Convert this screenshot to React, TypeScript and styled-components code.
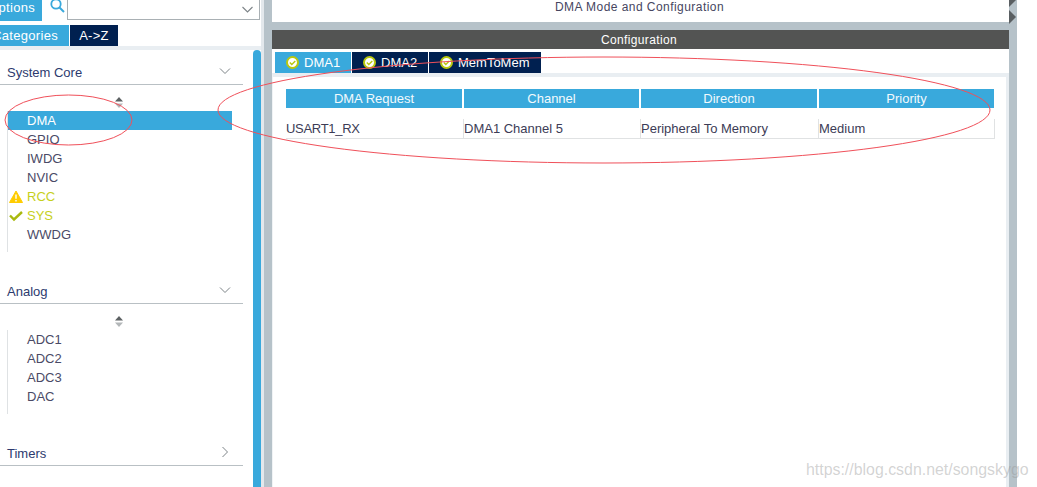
import React from "react";
import styled, { createGlobalStyle } from "styled-components";

const GlobalStyle = createGlobalStyle`
  html, body {
    margin: 0;
    padding: 0;
    background: #fff;
  }
  body {
    font-family: "Liberation Sans", Arial, sans-serif;
    font-size: 13px;
    color: #3b3b5c;
  }
`;

const Page = styled.div`
  position: relative;
  display: flex;
  width: 1037px;
  height: 487px;
  overflow: hidden;
  background: #fff;
`;

const Sidebar = styled.aside`
  width: 261px;
  height: 487px;
  flex: none;
  display: flex;
  flex-direction: column;
`;

const SearchRow = styled.div`
  display: flex;
  height: 25px;
  flex: none;
`;

const OptionsButton = styled.div`
  width: 42px;
  height: 21px;
  background: #39a9dc;
  color: #fff;
  display: flex;
  justify-content: flex-end;
  align-items: center;
  overflow: hidden;
  white-space: nowrap;
  padding: 0 7px 6px 0;
  box-sizing: border-box;
  letter-spacing: 0.3px;
`;

const SearchIcon = styled.svg`
  width: 15px;
  height: 15px;
  margin: -2px 2px 0 8px;
  flex: none;
`;

const SearchBox = styled.div`
  width: 193px;
  height: 20px;
  box-sizing: border-box;
  border: 1px solid #a9b0b4;
  border-top: 0;
  display: flex;
  justify-content: flex-end;
  align-items: center;
  padding-right: 6px;
`;

const SortTabs = styled.div`
  display: flex;
  gap: 1px;
  height: 21px;
  flex: none;
`;

const SortTab = styled.div<{ $active?: boolean; $width: number }>`
  width: ${(p) => p.$width}px;
  background: ${(p) => (p.$active ? "#39a9dc" : "#002050")};
  color: #fff;
  display: flex;
  justify-content: ${(p) => (p.$active ? "flex-end" : "center")};
  align-items: center;
  overflow: hidden;
  white-space: nowrap;
  box-sizing: border-box;
  padding-right: ${(p) => (p.$active ? 11 : 0)}px;
  letter-spacing: 0.3px;
`;

const SidebarBody = styled.div`
  flex: 1;
  display: flex;
  border-top: 4px solid #e9eef2;
  min-height: 0;
`;

const CategoryList = styled.div`
  width: 253px;
  flex: none;
  box-sizing: border-box;
  padding-right: 10px;
`;

const Scrollbar = styled.div`
  width: 8px;
  flex: none;
  background: #39a9dc;
  border-radius: 4px 4px 0 0;
`;

const SectionHeader = styled.div<{ $top: number }>`
  height: 20px;
  margin-top: ${(p) => p.$top}px;
  border-bottom: 1px solid #b9c0c4;
  display: flex;
  justify-content: space-between;
  align-items: center;
  padding: 0 12px 1px 7px;
  color: #2c3a6e;
  font-size: 13px;
  line-height: 20px;
`;

const Chevron = styled.svg`
  width: 12px;
  height: 12px;
  flex: none;
  margin-top: -4px;
`;

const ScrollArrows = styled.svg`
  display: block;
  width: 8px;
  height: 12px;
  margin: 12px 0 0 115px;
`;

const PeripheralList = styled.ul`
  list-style: none;
  margin: 2px 11px 0 7px;
  padding: 0 0 8px;
  border-left: 1px solid #dfe2e4;
`;

const Peripheral = styled.li<{ $state?: "selected" | "warn" | "ok" }>`
  position: relative;
  height: 19px;
  line-height: 19px;
  padding-left: 19px;
  font-size: 13px;
  background: ${(p) => (p.$state === "selected" ? "#39a9dc" : "transparent")};
  color: ${(p) =>
    p.$state === "selected"
      ? "#fff"
      : p.$state
        ? "#c6d01c"
        : "#4a4a66"};
`;

const StatusIcon = styled.svg`
  position: absolute;
  left: 1px;
  top: 3px;
  width: 14px;
  height: 14px;
`;

const Divider = styled.div`
  width: 3px;
  flex: none;
  background: #e3e8ec;
`;

const Splitter = styled.div`
  width: 8px;
  flex: none;
  background: #b6c2c9;
`;

const Main = styled.main`
  width: 737px;
  flex: none;
  display: flex;
  flex-direction: column;
`;

const TopPanel = styled.div`
  height: 22px;
  flex: none;
  text-align: center;
  line-height: 15px;
  font-size: 12px;
  letter-spacing: 0.45px;
  color: #46465f;
  padding-right: 2px;
  box-sizing: border-box;
`;

const Gap = styled.div`
  height: 8px;
  flex: none;
  background: #b6c2c9;
`;

const ConfigTitle = styled.div`
  height: 19px;
  flex: none;
  background: #535453;
  color: #fff;
  text-align: center;
  line-height: 20px;
  font-size: 12px;
  letter-spacing: 0.35px;
  padding-right: 3px;
  box-sizing: border-box;
`;

const TabBar = styled.div`
  display: flex;
  gap: 1px;
  height: 21px;
  margin-top: 3px;
  padding-left: 3px;
  flex: none;
`;

const Tab = styled.div<{ $active?: boolean; $width: number }>`
  width: ${(p) => p.$width}px;
  background: ${(p) => (p.$active ? "#39a9dc" : "#002050")};
  color: #fff;
  display: flex;
  align-items: center;
  gap: 5px;
  padding-left: 11px;
  box-sizing: border-box;
  font-size: 13px;
`;

const TabIcon = styled.svg`
  width: 13px;
  height: 13px;
  flex: none;
`;

const ConfigBody = styled.div`
  flex: 1;
  background: #fff;
  border-top: 4px solid #e9eef2;
  border-right: 3px solid #e9eef2;
  border-left: 1px solid #f0f3f5;
  padding: 12px 12px 0 13px;
`;

const GridRow = styled.div`
  display: grid;
  grid-template-columns: 176px 175px 176px 175px;
  column-gap: 2px;
  width: 708px;
`;

const HeadCell = styled.div`
  height: 19px;
  line-height: 19px;
  background: #39a9dc;
  color: #f2fafd;
  text-align: center;
  font-size: 13px;
`;

const DataRow = styled.div`
  display: grid;
  grid-template-columns: 177px 177px 178px 177px;
  width: 709px;
  height: 20px;
  margin-top: 11px;
  box-sizing: border-box;
  border-bottom: 1px solid #e0e2e3;
  border-right: 1px solid #e0e2e3;
`;

const DataCell = styled.div`
  line-height: 19px;
  font-size: 13px;
  color: #3c3c56;
  border-left: 1px solid #e0e2e3;
  &:first-child {
    border-left: 0;
    letter-spacing: -0.3px;
  }
`;

const RightRail = styled.div`
  position: relative;
  width: 8px;
  flex: none;
  background: #b6c2c9;
`;

const RailArrow = styled.svg<{ $top: number }>`
  position: absolute;
  left: 0;
  top: ${(p) => p.$top}px;
  width: 8px;
  height: 14px;
`;

const Markup = styled.svg`
  position: absolute;
  left: 0;
  top: 0;
  width: 1037px;
  height: 487px;
  pointer-events: none;
`;

const Watermark = styled.div`
  position: absolute;
  left: 806px;
  top: 461px;
  font-size: 15.9px;
  line-height: 18px;
  color: rgba(150, 150, 150, 0.42);
  white-space: nowrap;
`;

const ChevronDown = () => (
  <Chevron viewBox="0 0 12 12">
    <path d="M1 3.5 L6 8.5 L11 3.5" fill="none" stroke="#7d8488" strokeWidth="1" />
  </Chevron>
);

const ChevronRight = () => (
  <Chevron viewBox="0 0 12 12">
    <path d="M3.5 1 L8.5 6 L3.5 11" fill="none" stroke="#7d8488" strokeWidth="1" />
  </Chevron>
);

const Arrows = () => (
  <ScrollArrows viewBox="0 0 8 12">
    <path d="M4 0 L8 4.5 L0 4.5 Z" fill="#5d6163" />
    <path d="M0 6.5 L8 6.5 L4 11 Z" fill="#b3b7b9" />
  </ScrollArrows>
);

const TabCheck = () => (
  <TabIcon viewBox="0 0 13 13">
    <circle cx="6.5" cy="6.5" r="5.5" fill="#fff" stroke="#b9c80f" strokeWidth="2" />
    <path d="M3.8 6.4 L5.8 8.4 L9.3 4.9" fill="none" stroke="#b9c80f" strokeWidth="1.4" />
  </TabIcon>
);

const tabs = [
  { name: "DMA1", width: 76 },
  { name: "DMA2", width: 76 },
  { name: "MemToMem", width: 112 },
];

const columns = ["DMA Request", "Channel", "Direction", "Priority"];
const row = ["USART1_RX", "DMA1 Channel 5", "Peripheral To Memory", "Medium"];

export default function App() {
  return (
    <>
      <GlobalStyle />
      <Page>
        <Sidebar>
          <SearchRow>
            <OptionsButton>Options</OptionsButton>
            <SearchIcon viewBox="0 0 15 15">
              <circle cx="6" cy="6" r="4.7" fill="none" stroke="#39a9dc" strokeWidth="1.8" />
              <path d="M9.5 9.5 L14 14" stroke="#39a9dc" strokeWidth="2" />
            </SearchIcon>
            <SearchBox>
              <svg width="11" height="7" viewBox="0 0 11 7">
                <path d="M0.5 1 L5.5 6 L10.5 1" fill="none" stroke="#7d8488" strokeWidth="1.1" />
              </svg>
            </SearchBox>
          </SearchRow>
          <SortTabs>
            <SortTab $active $width={69}>Categories</SortTab>
            <SortTab $width={48}>{"A->Z"}</SortTab>
          </SortTabs>
          <SidebarBody>
            <CategoryList>
              <SectionHeader $top={13}>
                System Core
                <ChevronDown />
              </SectionHeader>
              <Arrows />
              <PeripheralList>
                <Peripheral $state="selected">DMA</Peripheral>
                <Peripheral>GPIO</Peripheral>
                <Peripheral>IWDG</Peripheral>
                <Peripheral>NVIC</Peripheral>
                <Peripheral $state="warn">
                  <StatusIcon viewBox="0 0 14 14">
                    <path d="M7 1 L13.5 12.5 L0.5 12.5 Z" fill="#fc0" stroke="#fc0" strokeLinejoin="round" />
                    <path d="M7 4.5 V8.8 M7 10 V11.4" stroke="#fff" strokeWidth="1.4" />
                  </StatusIcon>
                  RCC
                </Peripheral>
                <Peripheral $state="ok">
                  <StatusIcon viewBox="0 0 14 14">
                    <path d="M1 6.5 L5 10.5 L13 3" fill="none" stroke="#a9b90f" strokeWidth="2.4" />
                  </StatusIcon>
                  SYS
                </Peripheral>
                <Peripheral>WWDG</Peripheral>
              </PeripheralList>
              <SectionHeader $top={30}>
                Analog
                <ChevronDown />
              </SectionHeader>
              <Arrows />
              <PeripheralList>
                <Peripheral>ADC1</Peripheral>
                <Peripheral>ADC2</Peripheral>
                <Peripheral>ADC3</Peripheral>
                <Peripheral>DAC</Peripheral>
              </PeripheralList>
              <SectionHeader $top={30}>
                Timers
                <ChevronRight />
              </SectionHeader>
            </CategoryList>
            <Scrollbar />
          </SidebarBody>
        </Sidebar>
        <Divider />
        <Splitter />
        <Main>
          <TopPanel>DMA Mode and Configuration</TopPanel>
          <Gap />
          <ConfigTitle>Configuration</ConfigTitle>
          <TabBar>
            {tabs.map((t, i) => (
              <Tab key={t.name} $active={i === 0} $width={t.width}>
                <TabCheck />
                {t.name}
              </Tab>
            ))}
          </TabBar>
          <ConfigBody>
            <GridRow>
              {columns.map((c) => (
                <HeadCell key={c}>{c}</HeadCell>
              ))}
            </GridRow>
            <DataRow>
              {row.map((c) => (
                <DataCell key={c}>{c}</DataCell>
              ))}
            </DataRow>
          </ConfigBody>
        </Main>
        <RightRail>
          <RailArrow $top={-7} viewBox="0 0 8 14">
            <path d="M0 0 L7 7 L0 14 Z" fill="#5a5f62" />
          </RailArrow>
          <RailArrow $top={10} viewBox="0 0 8 14">
            <path d="M0 0 L7 7 L0 14 Z" fill="#5a5f62" />
          </RailArrow>
        </RightRail>
        <Markup viewBox="0 0 1037 487">
          <ellipse cx="68.5" cy="120" rx="63.5" ry="25" fill="none" stroke="#f0505a" strokeWidth="1" />
          <ellipse cx="604" cy="110" rx="386" ry="53" fill="none" stroke="#f0505a" strokeWidth="1" />
        </Markup>
        <Watermark>https://blog.csdn.net/songskygo</Watermark>
      </Page>
    </>
  );
}
